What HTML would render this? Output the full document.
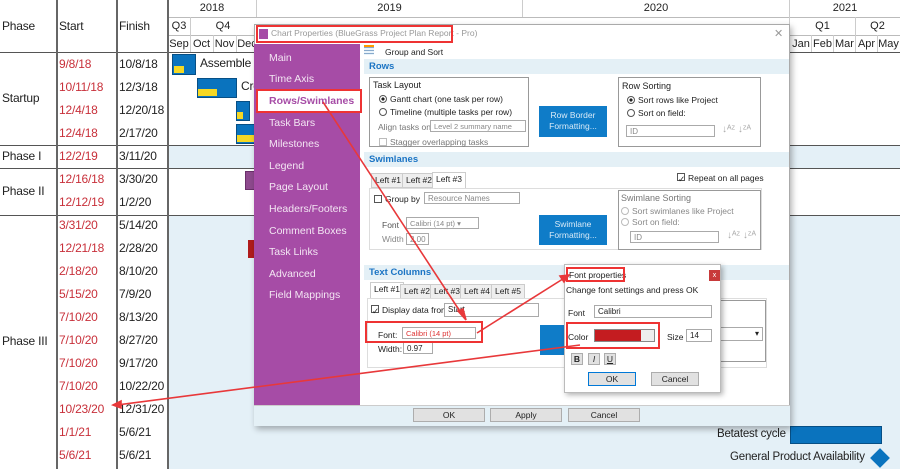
<!DOCTYPE html>
<html><head><meta charset="utf-8">
<style>
*{margin:0;padding:0;box-sizing:border-box}
body{width:900px;height:469px;overflow:hidden;background:#fff;font-family:"Liberation Sans",sans-serif;position:relative}
.a{position:absolute}
.g{font-size:12px;color:#222;white-space:nowrap;letter-spacing:-0.2px}
.r{color:#c8303a}
.vl{position:absolute;width:2px;background:#666}
.hl{position:absolute;height:1px;background:#777}
.th{position:absolute;font-size:11px;color:#222;text-align:center}
.d{font-size:8.5px;color:#222;white-space:nowrap}
.side{position:absolute;left:269px;font-size:10.5px;color:#f3e6f3}
.sec{position:absolute;left:364px;width:425px;height:15px;background:#e4f0f6;color:#1b74c4;font-weight:bold;font-size:9.5px;padding:2px 5px}
.box{position:absolute;border:1px solid #999;background:#fff}
.btn{position:absolute;background:#0f7cc8;color:#d8eaf7;font-size:8.5px;text-align:center;line-height:11px}
.dd{position:absolute;border:1px solid #aaa;background:#fff;font-size:8px;color:#888;padding:1px 3px;white-space:nowrap}
.rad{display:inline-block;width:8px;height:8px;border:1px solid #555;border-radius:50%;vertical-align:-1px;margin-right:3px;background:#fff}
.chk{display:inline-block;width:8px;height:8px;border:1px solid #555;vertical-align:-1px;margin-right:3px;background:#fff}
.tab{position:absolute;font-size:8.5px;color:#222;border:1px solid #ccc;background:#eee;padding:1px 3px;height:15px}
.pb{position:absolute;background:#e1e1e1;border:1px solid #adadad;font-size:8.5px;text-align:center;line-height:12px;color:#222}
</style></head><body>

<div class="a" style="left:168px;top:146px;width:732px;height:22px;background:#e4f0f7"></div>
<div class="a" style="left:168px;top:216px;width:732px;height:253px;background:#e4f0f7"></div>

<div class="hl" style="left:0;top:52px;width:900px;background:#555"></div>
<div class="hl" style="left:168px;top:17px;width:732px;background:#bbb"></div>
<div class="hl" style="left:168px;top:35px;width:732px;background:#bbb"></div>
<div class="hl" style="left:0;top:145px;width:900px;background:#555"></div>
<div class="hl" style="left:0;top:168px;width:900px;background:#555"></div>
<div class="hl" style="left:0;top:215px;width:900px;background:#555"></div>
<div class="vl" style="left:56px;top:0;height:469px"></div>
<div class="vl" style="left:116px;top:0;height:469px"></div>
<div class="vl" style="left:167px;top:0;height:469px"></div>
<div class="a" style="left:256px;top:0;width:1px;height:17px;background:#ccc"></div>
<div class="a" style="left:522px;top:0;width:1px;height:17px;background:#ccc"></div>
<div class="a" style="left:789px;top:0;width:1px;height:52px;background:#ccc"></div>
<div class="a" style="left:190px;top:17px;width:1px;height:35px;background:#ccc"></div>
<div class="a" style="left:213px;top:35px;width:1px;height:17px;background:#ccc"></div>
<div class="a" style="left:236px;top:35px;width:1px;height:17px;background:#ccc"></div>
<div class="a" style="left:855px;top:17px;width:1px;height:35px;background:#ccc"></div>
<div class="a" style="left:811px;top:35px;width:1px;height:17px;background:#ccc"></div>
<div class="a" style="left:833px;top:35px;width:1px;height:17px;background:#ccc"></div>
<div class="a" style="left:877px;top:35px;width:1px;height:17px;background:#ccc"></div>

<div class="th" style="left:168px;top:2px;width:88px">2018</div>
<div class="th" style="left:257px;top:2px;width:265px">2019</div>
<div class="th" style="left:523px;top:2px;width:266px">2020</div>
<div class="th" style="left:790px;top:2px;width:110px">2021</div>
<div class="th" style="left:168px;top:20px;width:22px">Q3</div>
<div class="th" style="left:190px;top:20px;width:66px">Q4</div>
<div class="th" style="left:790px;top:20px;width:65px">Q1</div>
<div class="th" style="left:855px;top:20px;width:45px">Q2</div>
<div class="th" style="left:168px;top:38px;width:22px">Sep</div>
<div class="th" style="left:190px;top:38px;width:23px">Oct</div>
<div class="th" style="left:213px;top:38px;width:23px">Nov</div>
<div class="th" style="left:236px;top:38px;width:22px">Dec</div>
<div class="th" style="left:790px;top:38px;width:22px">Jan</div>
<div class="th" style="left:812px;top:38px;width:21px">Feb</div>
<div class="th" style="left:833px;top:38px;width:23px">Mar</div>
<div class="th" style="left:856px;top:38px;width:21px">Apr</div>
<div class="th" style="left:877px;top:38px;width:23px">May</div>

<div class="a g" style="left:2px;top:19px">Phase</div>
<div class="a g" style="left:59px;top:19px">Start</div>
<div class="a g" style="left:119px;top:19px">Finish</div>
<div class="a g" style="left:2px;top:91px">Startup</div>
<div class="a g" style="left:2px;top:149px">Phase I</div>
<div class="a g" style="left:2px;top:184px">Phase II</div>
<div class="a g" style="left:2px;top:334px">Phase III</div>

<div class="a g r" style="left:59px;top:53px;line-height:23px">9/8/18<br>10/11/18<br>12/4/18<br>12/4/18<br>12/2/19<br>12/16/18<br>12/12/19<br>3/31/20<br>12/21/18<br>2/18/20<br>5/15/20<br>7/10/20<br>7/10/20<br>7/10/20<br>7/10/20<br>10/23/20<br>1/1/21<br>5/6/21</div>
<div class="a g" style="left:119px;top:53px;line-height:23px">10/8/18<br>12/3/18<br>12/20/18<br>2/17/20<br>3/11/20<br>3/30/20<br>1/2/20<br>5/14/20<br>2/28/20<br>8/10/20<br>7/9/20<br>8/13/20<br>8/27/20<br>9/17/20<br>10/22/20<br>12/31/20<br>5/6/21<br>5/6/21</div>

<div class="a" style="left:172px;top:54px;width:24px;height:21px;background:#0a73be;border:1px solid #074f85"></div>
<div class="a" style="left:174px;top:66px;width:10px;height:7px;background:#f5d824"></div>
<div class="a g" style="left:200px;top:56px">Assemble P</div>
<div class="a" style="left:197px;top:78px;width:40px;height:20px;background:#0a73be;border:1px solid #074f85"></div>
<div class="a" style="left:198px;top:89px;width:19px;height:7px;background:#f5d824"></div>
<div class="a g" style="left:241px;top:79px">Cre</div>
<div class="a" style="left:236px;top:101px;width:14px;height:20px;background:#0a73be;border:1px solid #074f85"></div>
<div class="a" style="left:237px;top:112px;width:6px;height:7px;background:#f5d824"></div>
<div class="a" style="left:236px;top:124px;width:20px;height:20px;background:#0a73be;border:1px solid #074f85"></div>
<div class="a" style="left:237px;top:135px;width:18px;height:7px;background:#f5d824"></div>
<div class="a" style="left:245px;top:171px;width:10px;height:19px;background:#8e4a8e;border:1px solid #6a306a"></div>
<div class="a" style="left:248px;top:240px;width:7px;height:18px;background:#b01c1c"></div>
<div class="a" style="left:786px;top:402px;width:4px;height:21px;background:#0a5ea0"></div>
<div class="a" style="left:790px;top:426px;width:92px;height:18px;background:#0a73be;border:1px solid #074f85"></div>
<div class="a g" style="left:717px;top:428px;font-size:11.5px">Betatest cycle</div>
<div class="a g" style="left:730px;top:451px;font-size:11.5px">General Product Availability</div>
<div class="a" style="left:873px;top:451px;width:14px;height:14px;background:#0a73be;transform:rotate(45deg)"></div>

<div class="a" style="left:254px;top:24px;width:536px;height:402px;background:#fff;border:1px solid #aaa;box-shadow:2px 3px 6px rgba(0,0,0,.3)"></div>
<div class="a" style="left:259px;top:29px;width:9px;height:10px;background:#a64ca6"></div>
<div class="a" style="left:271px;top:28px;font-size:8.5px;color:#999;white-space:nowrap">Chart Properties (BlueGrass Project Plan Report - Pro)</div>
<div class="a" style="left:256px;top:25px;width:197px;height:18px;border:2px solid #e33"></div>
<div class="a" style="left:774px;top:27px;font-size:11px;color:#999">✕</div>
<div class="a" style="left:254px;top:44px;width:106px;height:361px;background:#a64ca6"></div>
<div class="a" style="left:254px;top:405px;width:536px;height:21px;background:#e4f0f6;border-top:1px solid #ccc"></div>
<div class="pb" style="left:413px;top:408px;width:72px;height:14px">OK</div>
<div class="pb" style="left:490px;top:408px;width:72px;height:14px">Apply</div>
<div class="pb" style="left:568px;top:408px;width:72px;height:14px">Cancel</div>

<div class="side" style="top:52px">Main</div>
<div class="side" style="top:73px">Time Axis</div>
<div class="a" style="left:256px;top:89px;width:106px;height:24px;background:#fff;border:2px solid #e33"></div>
<div class="side" style="top:95px;color:#a64ca6;font-weight:bold">Rows/Swimlanes</div>
<div class="side" style="top:117px">Task Bars</div>
<div class="side" style="top:138px">Milestones</div>
<div class="side" style="top:160px">Legend</div>
<div class="side" style="top:181px">Page Layout</div>
<div class="side" style="top:203px">Headers/Footers</div>
<div class="side" style="top:225px">Comment Boxes</div>
<div class="side" style="top:246px">Task Links</div>
<div class="side" style="top:268px">Advanced</div>
<div class="side" style="top:289px">Field Mappings</div>

<div class="a" style="left:364px;top:45px;width:10px;height:10px;background:repeating-linear-gradient(#8ac 0 1px,#eaf4fb 1px 3px);border-top:2px solid #f90"></div>
<div class="a d" style="left:385px;top:47px">Group and Sort</div>

<div class="sec" style="top:59px">Rows</div>
<div class="box" style="left:369px;top:77px;width:160px;height:70px"></div>
<div class="a d" style="left:373px;top:80px;font-size:9px">Task Layout</div>
<div class="a d" style="left:379px;top:94px"><span class="rad" style="background:radial-gradient(#222 35%,#fff 40%)"></span>Gantt chart (one task per row)</div>
<div class="a d" style="left:379px;top:107px"><span class="rad"></span>Timeline (multiple tasks per row)</div>
<div class="a d" style="left:378px;top:122px;color:#777">Align tasks on</div>
<div class="dd" style="left:430px;top:120px;width:96px;height:12px;font-size:7.5px">Level 2 summary name</div>
<div class="a d" style="left:379px;top:137px;color:#777"><span class="chk" style="border-color:#bbb"></span>Stagger overlapping tasks</div>
<div class="btn" style="left:539px;top:106px;width:68px;height:31px;padding-top:4px">Row Border<br>Formatting...</div>
<div class="box" style="left:618px;top:77px;width:143px;height:70px"></div>
<div class="a d" style="left:622px;top:81px;font-size:9px">Row Sorting</div>
<div class="a d" style="left:627px;top:95px"><span class="rad" style="background:radial-gradient(#222 35%,#fff 40%)"></span>Sort rows like Project</div>
<div class="a d" style="left:627px;top:108px"><span class="rad"></span>Sort on field:</div>
<div class="dd" style="left:626px;top:125px;width:89px;height:12px">ID</div>
<div class="a d" style="left:722px;top:124px;color:#aaa;font-size:10px">↓ᴬᶻ ↓ᶻᴬ</div>

<div class="sec" style="top:152px">Swimlanes</div>
<div class="tab" style="left:371px;top:173px">Left #1</div>
<div class="tab" style="left:402px;top:173px">Left #2</div>
<div class="tab" style="left:432px;top:172px;background:#fff;border-bottom-color:#fff;height:17px">Left #3</div>
<div class="a d" style="left:677px;top:173px"><span class="chk">✓</span>Repeat on all pages</div>
<div class="box" style="left:369px;top:188px;width:393px;height:62px;border-color:#ddd"></div>
<div class="a d" style="left:374px;top:194px"><span class="chk"></span>Group by</div>
<div class="dd" style="left:424px;top:192px;width:96px;height:12px">Resource Names</div>
<div class="a d" style="left:382px;top:220px;color:#555">Font</div>
<div class="dd" style="left:406px;top:217px;width:73px;height:12px;font-size:7.5px">Calibri (14 pt) ▾</div>
<div class="a d" style="left:382px;top:234px;color:#888">Width</div>
<div class="dd" style="left:406px;top:233px;width:23px;height:12px">2.00</div>
<div class="btn" style="left:539px;top:215px;width:68px;height:30px;padding-top:4px">Swimlane<br>Formatting...</div>
<div class="box" style="left:618px;top:190px;width:143px;height:60px"></div>
<div class="a d" style="left:621px;top:193px;color:#777;font-size:9px">Swimlane Sorting</div>
<div class="a d" style="left:621px;top:206px;color:#888"><span class="rad" style="border-color:#bbb"></span>Sort swimlanes like Project</div>
<div class="a d" style="left:621px;top:217px;color:#888"><span class="rad" style="border-color:#bbb"></span>Sort on field:</div>
<div class="dd" style="left:630px;top:231px;width:89px;height:12px">ID</div>
<div class="a d" style="left:727px;top:230px;color:#aaa;font-size:10px">↓ᴬᶻ ↓ᶻᴬ</div>

<div class="sec" style="top:265px">Text Columns</div>
<div class="tab" style="left:370px;top:282px;background:#fff;border-bottom-color:#fff;height:17px">Left #1</div>
<div class="tab" style="left:400px;top:284px">Left #2</div>
<div class="tab" style="left:430px;top:284px">Left #3</div>
<div class="tab" style="left:460px;top:284px">Left #4</div>
<div class="tab" style="left:491px;top:284px">Left #5</div>
<div class="box" style="left:367px;top:298px;width:400px;height:70px;border-color:#ddd"></div>
<div class="a d" style="left:371px;top:305px"><span class="chk">✓</span>Display data from</div>
<div class="dd" style="left:444px;top:303px;width:95px;height:14px;color:#222">Start</div>
<div class="a d" style="left:378px;top:330px">Font:</div>
<div class="dd" style="left:402px;top:327px;width:74px;height:12px;color:#d33;font-size:7.5px">Calibri (14 pt)</div>
<div class="a d" style="left:378px;top:344px">Width:</div>
<div class="dd" style="left:403px;top:342px;width:30px;height:12px;color:#222">0.97</div>
<div class="a" style="left:365px;top:321px;width:118px;height:22px;border:2px solid #e33"></div>
<div class="btn" style="left:540px;top:325px;width:26px;height:30px"></div>
<div class="box" style="left:700px;top:300px;width:66px;height:62px"></div>
<div class="dd" style="left:705px;top:327px;width:58px;height:14px;color:#222;text-align:right">▾</div>

<div class="a" style="left:564px;top:264px;width:157px;height:129px;background:#fff;border:1px solid #bbb;box-shadow:2px 2px 5px rgba(0,0,0,.3)"></div>
<div class="a d" style="left:569px;top:270px">Font properties</div>
<div class="a" style="left:566px;top:267px;width:59px;height:15px;border:2px solid #e33"></div>
<div class="a" style="left:709px;top:270px;width:11px;height:11px;background:#c83a3a;color:#fff;font-size:7px;text-align:center;line-height:11px">x</div>
<div class="a d" style="left:566px;top:285px">Change font settings and press OK</div>
<div class="a d" style="left:568px;top:308px">Font</div>
<div class="dd" style="left:594px;top:305px;width:118px;height:13px;color:#222">Calibri</div>
<div class="a d" style="left:568px;top:332px">Color</div>
<div class="a" style="left:594px;top:329px;width:61px;height:13px;border:1px solid #888;background:linear-gradient(90deg,#c41c20 0 46px,#eee 46px)"></div>
<div class="a" style="left:566px;top:322px;width:94px;height:27px;border:2px solid #e33"></div>
<div class="a d" style="left:667px;top:332px">Size</div>
<div class="dd" style="left:686px;top:329px;width:26px;height:13px;color:#222">14</div>
<div class="pb" style="left:571px;top:353px;width:12px;height:12px;font-weight:bold;line-height:10px">B</div>
<div class="pb" style="left:588px;top:353px;width:12px;height:12px;font-style:italic;line-height:10px">I</div>
<div class="pb" style="left:604px;top:353px;width:12px;height:12px;text-decoration:underline;line-height:10px">U</div>
<div class="pb" style="left:588px;top:372px;width:48px;height:14px;border-color:#0078d7">OK</div>
<div class="pb" style="left:651px;top:372px;width:48px;height:14px">Cancel</div>

<svg class="a" style="left:0;top:0" width="900" height="469">
<g stroke="#e8383a" stroke-width="1.6" fill="#e8383a">
<line x1="323" y1="102" x2="463" y2="316"/>
<polygon points="466,320 458,311 463,309" />
<line x1="477" y1="333" x2="566" y2="277"/>
<polygon points="569,275 560,276 564,282"/>
<line x1="580" y1="345" x2="117" y2="405"/>
<polygon points="113,405 121,401 121,408"/>
</g></svg>
</body></html>
